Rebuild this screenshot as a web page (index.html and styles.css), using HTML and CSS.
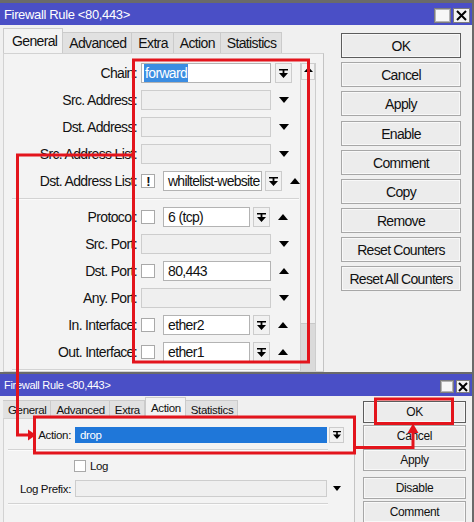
FILE: index.html
```html
<!DOCTYPE html>
<html lang="en">
<head>
    <meta charset="UTF-8">
    <title>Firewall Rule &lt;80,443&gt;</title>
    <link rel="stylesheet" href="styles.css">
</head>
<body>
    <div class="win win-main">
        <div class="titlebar">
            <span class="title">Firewall Rule &lt;80,443&gt;</span>
            <span class="tb-btns">
                <span class="tb-btn"><span class="max-box"></span></span>
                <span class="tb-btn"><svg width="13" height="13" viewBox="0 0 13 13"><path d="M2 2 L11 11 M11 2 L2 11" stroke="#000" stroke-width="2"/></svg></span>
            </span>
        </div>
        <div class="win-body">
            <div class="left">
                <div class="tabs">
                    <div class="tab active">General</div>
                    <div class="tab">Advanced</div>
                    <div class="tab">Extra</div>
                    <div class="tab">Action</div>
                    <div class="tab">Statistics</div>
                </div>
                <div class="panel">
                    <div class="scrollbar">
                        <div class="sb-up"><svg width="9" height="9" viewBox="0 0 9 9"><path d="M4.5 0 L9 5 L0 5 Z M3.5 5 H5.5 V9 H3.5 Z" fill="#000"/></svg></div>
                        <div class="sb-track"></div>
                        <div class="sb-thumb"></div>
                    </div>
                    <div class="form">
                        <div class="row">
                            <label class="lbl">Chain:</label>
                            <div class="field"><span class="selected">forward</span></div>
                            <div class="ddbtn chain-btn"><svg width="9" height="9" viewBox="0 0 9 9"><path d="M0 0 H9 V1.5 H0 Z M3.6 1.5 H5.4 V4 H3.6 Z M0 4 H9 L4.5 9 Z" fill="#000"/></svg></div>
                        </div>
                        <div class="row">
                            <label class="lbl">Src. Address:</label>
                            <div class="field off"></div>
                            <div class="arrow down"></div>
                        </div>
                        <div class="row">
                            <label class="lbl">Dst. Address:</label>
                            <div class="field off"></div>
                            <div class="arrow down"></div>
                        </div>
                        <div class="row">
                            <label class="lbl">Src. Address List:</label>
                            <div class="field off"></div>
                            <div class="arrow down"></div>
                        </div>
                        <div class="row">
                            <label class="lbl">Dst. Address List:</label>
                            <div class="chk bang">!</div>
                            <div class="field list">whiltelist-website</div>
                            <div class="ddbtn"><svg width="9" height="9" viewBox="0 0 9 9"><path d="M0 0 H9 V1.5 H0 Z M3.6 1.5 H5.4 V4 H3.6 Z M0 4 H9 L4.5 9 Z" fill="#000"/></svg></div>
                            <div class="arrow up"></div>
                        </div>
                        <div class="sep"></div>
                        <div class="row">
                            <label class="lbl">Protocol:</label>
                            <div class="chk"></div>
                            <div class="field short">6 (tcp)</div>
                            <div class="ddbtn"><svg width="9" height="9" viewBox="0 0 9 9"><path d="M0 0 H9 V1.5 H0 Z M3.6 1.5 H5.4 V4 H3.6 Z M0 4 H9 L4.5 9 Z" fill="#000"/></svg></div>
                            <div class="arrow up"></div>
                        </div>
                        <div class="row">
                            <label class="lbl">Src. Port:</label>
                            <div class="field off"></div>
                            <div class="arrow down"></div>
                        </div>
                        <div class="row">
                            <label class="lbl">Dst. Port:</label>
                            <div class="chk"></div>
                            <div class="field mid">80,443</div>
                            <div class="arrow up"></div>
                        </div>
                        <div class="row">
                            <label class="lbl">Any. Port:</label>
                            <div class="field off"></div>
                            <div class="arrow down"></div>
                        </div>
                        <div class="row">
                            <label class="lbl">In. Interface:</label>
                            <div class="chk"></div>
                            <div class="field short">ether2</div>
                            <div class="ddbtn"><svg width="9" height="9" viewBox="0 0 9 9"><path d="M0 0 H9 V1.5 H0 Z M3.6 1.5 H5.4 V4 H3.6 Z M0 4 H9 L4.5 9 Z" fill="#000"/></svg></div>
                            <div class="arrow up"></div>
                        </div>
                        <div class="row">
                            <label class="lbl">Out. Interface:</label>
                            <div class="chk"></div>
                            <div class="field short">ether1</div>
                            <div class="ddbtn"><svg width="9" height="9" viewBox="0 0 9 9"><path d="M0 0 H9 V1.5 H0 Z M3.6 1.5 H5.4 V4 H3.6 Z M0 4 H9 L4.5 9 Z" fill="#000"/></svg></div>
                            <div class="arrow up"></div>
                        </div>
                        <div class="sep"></div>
                    </div>
                </div>
            </div>
            <div class="buttons">
                <div class="btn default">OK</div>
                <div class="btn">Cancel</div>
                <div class="btn">Apply</div>
                <div class="btn spaced">Enable</div>
                <div class="btn">Comment</div>
                <div class="btn">Copy</div>
                <div class="btn">Remove</div>
                <div class="btn">Reset Counters</div>
                <div class="btn">Reset All Counters</div>
            </div>
        </div>
    </div>

    <div class="win win-sub">
        <div class="titlebar small">
            <span class="title">Firewall Rule &lt;80,443&gt;</span>
            <span class="tb-btns">
                <span class="tb-btn"><span class="max-box"></span></span>
                <span class="tb-btn"><svg width="12" height="12" viewBox="0 0 12 12"><path d="M2 2 L10 10 M10 2 L2 10" stroke="#000" stroke-width="2"/></svg></span>
            </span>
        </div>
        <div class="win-body">
            <div class="left">
                <div class="tabs">
                    <div class="tab">General</div>
                    <div class="tab">Advanced</div>
                    <div class="tab">Extra</div>
                    <div class="tab active">Action</div>
                    <div class="tab">Statistics</div>
                </div>
                <div class="panel">
                    <div class="form">
                        <div class="row action-row">
                            <label class="lbl">Action:</label>
                            <div class="field filled">drop</div>
                            <div class="ddbtn"><svg width="8" height="8" viewBox="0 0 9 9"><path d="M0 0 H9 V1.5 H0 Z M3.6 1.5 H5.4 V4 H3.6 Z M0 4 H9 L4.5 9 Z" fill="#000"/></svg></div>
                        </div>
                        <div class="sep"></div>
                        <div class="row log-row">
                            <div class="chk"></div>
                            <span class="log-text">Log</span>
                        </div>
                        <div class="row prefix-row">
                            <label class="lbl">Log Prefix:</label>
                            <div class="field off"></div>
                            <div class="arrow down"></div>
                        </div>
                        <div class="sep"></div>
                    </div>
                </div>
            </div>
            <div class="buttons">
                <div class="btn default">OK</div>
                <div class="btn">Cancel</div>
                <div class="btn">Apply</div>
                <div class="btn spaced">Disable</div>
                <div class="btn">Comment</div>
            </div>
        </div>
    </div>

    <svg class="marks" width="474" height="522" viewBox="0 0 474 522">
        <g fill="none" stroke="#e3141c" stroke-width="3">
            <rect x="133.5" y="60" width="175" height="302"/>
            <polyline points="133,155 17.5,155 17.5,435 29,435"/>
            <rect x="34.5" y="417" width="320" height="36"/>
            <polyline points="356,447.5 413,447.5 413,431"/>
            <rect x="375.5" y="399" width="77" height="24.5"/>
        </g>
        <g fill="#e3141c">
            <polygon points="28,429.5 36,435 28,440.5"/>
            <polygon points="407.5,433 413,423.5 418.5,433"/>
        </g>
    </svg>
</body>
</html>
```

FILE: styles.css
```css
* {
    box-sizing: border-box;
}

body {
    margin: 0;
    width: 474px;
    height: 522px;
    overflow: hidden;
    position: relative;
    background: #6a6a6a;
    font-family: 'Liberation Sans', Arial, sans-serif;
    color: #111;
}

.win {
    width: 472px;
    background: #f0f0f0;
    display: flex;
    flex-direction: column;
}

.win-main {
    margin-top: 3px;
    height: 369px;
    font-size: 14px;
    letter-spacing: -0.65px;
}

.win-sub {
    margin-top: 2px;
    height: 160px;
    font-size: 11.5px;
    letter-spacing: -0.35px;
}

.titlebar {
    height: 22px;
    flex: none;
    background: #4a4fc6;
    color: #fff;
    display: flex;
    align-items: center;
    justify-content: space-between;
    padding: 0 2px 0 4px;
}

.titlebar .title {
    font-size: 13px;
    letter-spacing: -0.35px;
}

.titlebar.small .title {
    font-size: 11px;
    letter-spacing: -0.3px;
}

.tb-btns {
    display: flex;
    gap: 2px;
    margin-top: 3px;
}

.tb-btn {
    width: 17px;
    height: 15px;
    background: #f2f2f2;
    border: 1px solid #7d7d7d;
    display: flex;
    align-items: center;
    justify-content: center;
}

.titlebar.small .tb-btn {
    width: 14px;
    height: 13px;
}

.max-box {
    width: 100%;
    height: 100%;
    border: 1px solid #b4b4b4;
    background: #f7f7f7;
}

.win-body {
    flex: 1;
    display: flex;
}

.left {
    display: flex;
    flex-direction: column;
}

.win-main .left {
    width: 324px;
}

.win-sub .left {
    width: 355px;
}

/* tabs */
.tabs {
    display: flex;
    align-items: flex-end;
    padding-left: 3px;
}

.win-main .tabs {
    height: 25px;
    margin-top: 3px;
}

.win-sub .tabs {
    height: 21px;
    margin-top: 1px;
}

.tab {
    display: flex;
    align-items: center;
    background: #e1e1e1;
    border: 1px solid #cbcbcb;
    border-bottom: none;
    border-left: none;
}

.win-main .tab {
    height: 21px;
    padding: 0 5px 0 6px;
}

.win-sub .tab {
    height: 18px;
    padding: 0 4px 0 5px;
}

.tab.active {
    background: #f3f3f3;
    border-left: 1px solid #cbcbcb;
}

.win-main .tab.active {
    height: 25px;
    padding-left: 8px;
}

.win-sub .tab.active {
    height: 21px;
}

.panel {
    flex: 1;
    margin-left: 3px;
    background: #f3f3f3;
    border: 1px solid #d2d2d2;
    border-right-color: #c4c4c4;
    display: flex;
}

.win-main .panel {
    margin-bottom: 2px;
}

/* scrollbar */
.scrollbar {
    order: 2;
    width: 17px;
    margin: 9px 7px 0 0;
    display: flex;
    flex-direction: column;
    border-left: 1px solid #cdcdcd;
    border-right: 1px solid #cdcdcd;
}

.sb-up {
    height: 17px;
    border: 1px solid #cfcfcf;
    background: #f4f4f4;
    display: flex;
    align-items: center;
    justify-content: center;
}

.sb-track {
    flex: 1;
    background: #f0f0f0;
}

.sb-thumb {
    height: 48px;
    background: #dadada;
    border-top: 1px solid #c8c8c8;
}

/* form */
.form {
    order: 1;
    flex: 1;
    display: flex;
    flex-direction: column;
    gap: 7px;
}

.win-main .form {
    padding-top: 9px;
}

.win-sub .form {
    padding-top: 8px;
    gap: 6px;
}

.row {
    display: flex;
    align-items: center;
    height: 20px;
}

.lbl {
    width: 133px;
    margin-right: 4px;
    text-align: right;
    white-space: nowrap;
}

.field {
    height: 20px;
    width: 130px;
    background: #fff;
    border: 1px solid #b3b3b3;
    padding: 0 3px 0 4px;
    display: flex;
    align-items: center;
    white-space: nowrap;
    overflow: hidden;
}

.field.off {
    background: #efefef;
    border-color: #cdcdcd;
}

.field.list {
    width: 99px;
    letter-spacing: -0.75px;
}

.field.short {
    width: 87px;
}

.field.mid {
    width: 108px;
}

.selected {
    background: #3b8de2;
    color: #fff;
    margin-left: -2px;
    padding: 1px 1px;
}

.chk {
    width: 14px;
    height: 14px;
    margin-right: 8px;
    background: #fff;
    border: 1px solid #a9a9a9;
    flex: none;
}

.chk.bang {
    display: flex;
    align-items: center;
    justify-content: center;
    font-weight: bold;
    font-size: 13px;
}

.ddbtn {
    width: 17px;
    height: 20px;
    margin-left: 3px;
    background: #f1f1f1;
    border: 1px solid #cccccc;
    display: flex;
    align-items: center;
    justify-content: center;
    flex: none;
}

.ddbtn.chain-btn {
    margin-left: 4px;
}

.arrow {
    width: 0;
    height: 0;
    margin-left: 8px;
    border-left: 5.5px solid transparent;
    border-right: 5.5px solid transparent;
}

.arrow.down {
    border-top: 6px solid #000;
}

.arrow.up {
    border-bottom: 6px solid #000;
}

.sep {
    height: 2px;
    border-top: 1px solid #d3d3d3;
    border-bottom: 1px solid #fbfbfb;
    margin-left: 8px;
    width: 287px;
}

/* small window form */
.win-sub .row {
    height: 16px;
}

.win-sub .lbl {
    width: 67px;
}

.win-sub .field {
    width: 252px;
    height: 16px;
}

.win-sub .field.filled {
    background: #1f77d9;
    border-color: #1f77d9;
    color: #fff;
}

.win-sub .ddbtn {
    width: 15px;
    height: 16px;
    margin-left: 2px;
}

.win-sub .sep {
    width: 320px;
    margin-left: 4px;
}

.log-row {
    padding-left: 70px;
    margin-top: 1px;
}

.log-row .chk {
    width: 12px;
    height: 12px;
    margin-right: 4px;
}

.win-sub .row.prefix-row {
    height: 17px;
}

.win-sub .prefix-row .field {
    height: 17px;
}

.win-sub .arrow {
    margin-left: 6px;
    border-left-width: 4.5px;
    border-right-width: 4.5px;
}

.win-sub .arrow.down {
    border-top-width: 5px;
}

/* right side buttons */
.buttons {
    display: flex;
    flex-direction: column;
}

.win-main .buttons {
    margin-left: 17px;
    width: 120px;
    padding-top: 8px;
    gap: 4px;
}

.win-sub .buttons {
    margin-left: 8px;
    width: 103px;
    padding-top: 5px;
    gap: 2px;
}

.btn {
    background: #ececec;
    border: 1px solid #a7a7a7;
    box-shadow: inset 0 0 0 1px #f8f8f8;
    display: flex;
    align-items: center;
    justify-content: center;
    white-space: nowrap;
    word-spacing: -0.5px;
}

.win-main .btn {
    height: 25px;
}

.win-sub .btn {
    height: 22px;
    font-size: 12px;
}

.btn.default {
    border-color: #5c5c5c;
}

.win-main .btn.spaced {
    margin-top: 1px;
}

.win-sub .btn.spaced {
    margin-top: 4px;
}

/* annotation overlay */
.marks {
    position: absolute;
    left: 0;
    top: 0;
    pointer-events: none;
}
```
